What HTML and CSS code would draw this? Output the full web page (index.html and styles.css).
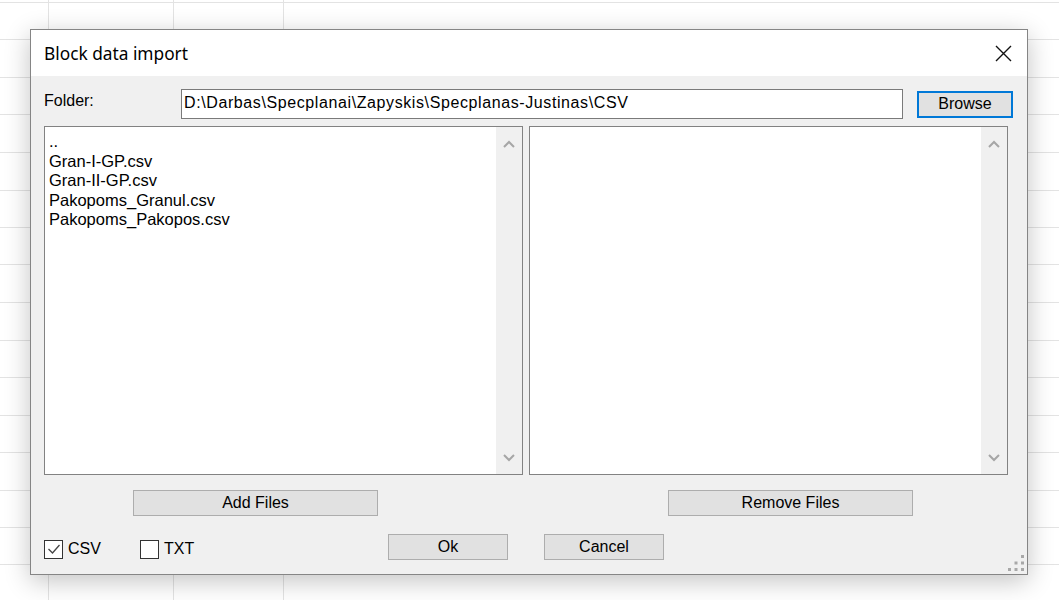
FILE: index.html
```html
<!DOCTYPE html>
<html lang="en">
<head>
    <meta charset="UTF-8">
    <title>Block data import</title>
    <link rel="stylesheet" href="styles.css">
</head>
<body>
<div class="window">
    <div class="titlebar">
        <span class="title">Block data import</span>
        <svg class="close" width="17" height="17" viewBox="0 0 17 17">
            <path d="M1 1 L16 16 M16 1 L1 16" stroke="#111" stroke-width="1.4" fill="none"/>
        </svg>
    </div>
    <div class="content">
        <div class="folder-row">
            <span class="label">Folder:</span>
            <div class="textbox">D:\Darbas\Specplanai\Zapyskis\Specplanas-Justinas\CSV</div>
            <button class="btn browse">Browse</button>
        </div>

        <div class="lists">
            <div class="listbox">
                <div class="items">
                    <div>..</div>
                    <div>Gran-I-GP.csv</div>
                    <div>Gran-II-GP.csv</div>
                    <div>Pakopoms_Granul.csv</div>
                    <div>Pakopoms_Pakopos.csv</div>
                </div>
                <div class="scrollbar">
                    <svg width="12" height="8" viewBox="0 0 12 8"><path d="M1 7 L6 2 L11 7" stroke="#a6a6a6" stroke-width="2" fill="none"/></svg>
                    <svg width="12" height="8" viewBox="0 0 12 8"><path d="M1 1 L6 6 L11 1" stroke="#a6a6a6" stroke-width="2" fill="none"/></svg>
                </div>
            </div>
            <div class="listbox">
                <div class="items"></div>
                <div class="scrollbar">
                    <svg width="12" height="8" viewBox="0 0 12 8"><path d="M1 7 L6 2 L11 7" stroke="#a6a6a6" stroke-width="2" fill="none"/></svg>
                    <svg width="12" height="8" viewBox="0 0 12 8"><path d="M1 1 L6 6 L11 1" stroke="#a6a6a6" stroke-width="2" fill="none"/></svg>
                </div>
            </div>
        </div>

        <div class="actions">
            <button class="btn wide add">Add Files</button>
            <button class="btn wide remove">Remove Files</button>
        </div>

        <div class="footer">
            <div class="checks">
                <label class="check">
                    <span class="box">
                        <svg width="16" height="16" viewBox="0 0 16 16"><path d="M2.5 8 L6.5 12 L13.5 4" stroke="#444" stroke-width="1.3" fill="none"/></svg>
                    </span>
                    CSV
                </label>
                <label class="check txt">
                    <span class="box"></span>
                    TXT
                </label>
            </div>
            <button class="btn small">Ok</button>
            <button class="btn small cancel">Cancel</button>
        </div>
    </div>
    <svg class="grip" width="18" height="18" viewBox="0 0 18 18">
        <rect x="13" y="0" width="3" height="3" fill="#a8a8a8"/>
        <rect x="6.5" y="6.5" width="3" height="3" fill="#a8a8a8"/>
        <rect x="13" y="6.5" width="3" height="3" fill="#a8a8a8"/>
        <rect x="0" y="13" width="3" height="3" fill="#a8a8a8"/>
        <rect x="6.5" y="13" width="3" height="3" fill="#a8a8a8"/>
        <rect x="13" y="13" width="3" height="3" fill="#a8a8a8"/>
    </svg>
</div>
</body>
</html>
```

FILE: styles.css
```css
* {
    box-sizing: border-box;
}
body {
    margin: 0;
    width: 1059px;
    height: 600px;
    overflow: hidden;
    padding: 29px 0 0 30px;
    font-family: "Liberation Sans", Arial, sans-serif;
    font-size: 16px;
    color: #000;
    background-color: #fff;
    background-image:
        linear-gradient(90deg, transparent 48px, #e3e3e3 48px, #e3e3e3 49px, transparent 49px),
        linear-gradient(90deg, transparent 173px, #e3e3e3 173px, #e3e3e3 174px, transparent 174px),
        linear-gradient(90deg, transparent 283px, #e3e3e3 283px, #e3e3e3 284px, transparent 284px),
        repeating-linear-gradient(180deg, transparent 0, transparent 2px, #e3e3e3 2px, #e3e3e3 3px, transparent 3px, transparent 37.5px);
}
.window {
    position: relative;
    width: 998px;
    height: 546px;
    border: 1px solid #858585;
    background: #f0f0f0;
    box-shadow: 0 6px 24px rgba(0, 0, 0, 0.24);
}
.titlebar {
    height: 46px;
    background: #fff;
    display: flex;
    align-items: center;
    padding: 0 15px 0 13px;
}
.title {
    font-family: "Noto Sans", "Open Sans", sans-serif;
    font-size: 17.3px;
    flex: 1;
}
.content {
    padding: 0 14px 0 13px;
}
.folder-row {
    display: flex;
    align-items: center;
    margin-top: 13px;
    height: 30px;
}
.label {
    width: 137px;
    margin-top: -6px;
}
.textbox {
    width: 722px;
    height: 30px;
    border: 1px solid #7a7a7a;
    background: #fff;
    padding: 4px 0 0 2px;
    white-space: nowrap;
    letter-spacing: 0.6px;
}
.btn {
    font-family: "Liberation Sans", Arial, sans-serif;
    font-size: 16px;
    color: #000;
    background: #e1e1e1;
    border: 1px solid #adadad;
    padding: 0;
}
.browse {
    margin-left: 14px;
    width: 96px;
    height: 27px;
    border: 2px solid #0078d7;
}
.lists {
    display: flex;
    gap: 6px;
    margin-top: 7px;
    height: 349px;
}
.listbox {
    width: 479px;
    height: 349px;
    border: 1px solid #828282;
    background: #fff;
    display: flex;
}
.items {
    flex: 1;
    padding: 5px 4px;
    font-size: 16.5px;
    line-height: 19.5px;
}
.scrollbar {
    width: 26px;
    background: #f0f0f0;
    display: flex;
    flex-direction: column;
    justify-content: space-between;
    align-items: center;
    padding: 13px 0 12px;
}
.actions {
    display: flex;
    margin-top: 15px;
    height: 26px;
}
.wide {
    width: 245px;
    height: 26px;
}
.add {
    margin-left: 89px;
}
.remove {
    margin-left: 290px;
}
.footer {
    display: flex;
    align-items: center;
    margin-top: 18px;
    height: 26px;
}
.checks {
    width: 344px;
    display: flex;
    padding-top: 4px;
}
.check {
    display: flex;
    align-items: center;
    gap: 5px;
    width: 96px;
}
.box {
    width: 19px;
    height: 19px;
    border: 1px solid #333;
    background: #fff;
    display: flex;
    align-items: center;
    justify-content: center;
}
.small {
    width: 120px;
    height: 26px;
}
.cancel {
    margin-left: 36px;
}
.grip {
    position: absolute;
    right: 1px;
    bottom: 1px;
}
```
